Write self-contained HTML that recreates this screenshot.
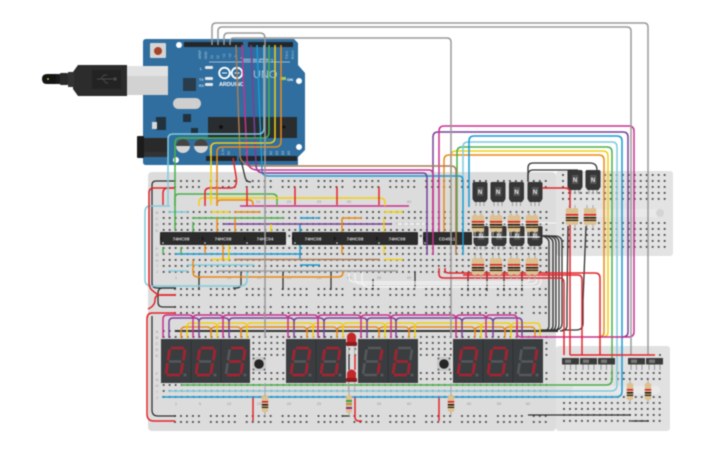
<!DOCTYPE html>
<html><head><meta charset="utf-8"><title>Circuit</title>
<style>html,body{margin:0;padding:0;background:#fff;width:725px;height:453px;overflow:hidden}
svg{display:block;position:absolute;left:0;top:0;filter:blur(.45px)}
text{font-family:"Liberation Sans",sans-serif}
.w path,.w line{fill:none}
</style></head><body>
<svg width="725" height="453" viewBox="0 0 725 453" xmlns="http://www.w3.org/2000/svg">
<defs>
<pattern id="h" patternUnits="userSpaceOnUse" x="0" y="0" width="5.98" height="5.98"><circle cx="2.99" cy="2.99" r="1.05" fill="#404040"/></pattern>
<pattern id="r" patternUnits="userSpaceOnUse" x="0" y="0" width="35.88" height="5.98"><g fill="#404040"><circle cx="2.99" cy="2.99" r="1.05"/><circle cx="8.97" cy="2.99" r="1.05"/><circle cx="14.95" cy="2.99" r="1.05"/><circle cx="20.93" cy="2.99" r="1.05"/><circle cx="26.91" cy="2.99" r="1.05"/></g></pattern>

<g id="dg" fill="none" stroke="#55585a" stroke-width="2.6"><path d="M10 9H23M8 22.5H20M6 36H19M8.6 10.5L7 21.2M24 10.5L22.4 21.2M6.6 24L5 34.8M21.6 24L20 34.8"/></g>
<g id="d0" fill="none" stroke="#a8202f" stroke-width="2.6"><path d="M10 9H23M6 36H19M8.6 10.5L7 21.2M24 10.5L22.4 21.2M6.6 24L5 34.8M21.6 24L20 34.8"/></g>
<g id="d1" fill="none" stroke="#a8202f" stroke-width="2.6"><path d="M24 10.5L22.4 21.2M21.6 24L20 34.8"/></g>
<g id="d3" fill="none" stroke="#a8202f" stroke-width="2.6"><path d="M10 9H23M8 22.5H20M6 36H19M24 10.5L22.4 21.2M21.6 24L20 34.8"/></g>
<g id="d6" fill="none" stroke="#a8202f" stroke-width="2.6"><path d="M8 22.5H20M6 36H19M8.6 10.5L7 21.2M6.6 24L5 34.8M21.6 24L20 34.8"/></g>

<g id="res"><line x1="0" y1="-3" x2="0" y2="21" stroke="#a8a8a8" stroke-width="1"/><rect x="-3.2" y="0" width="6.4" height="17" rx="2" fill="#dcc08f"/><rect x="-3.2" y="6" width="6.4" height="1.6" fill="#d8232a"/><rect x="-3.2" y="9" width="6.4" height="1.6" fill="#1c1c1c"/><rect x="-3.2" y="11.6" width="6.4" height="1.4" fill="#3a2a1a"/></g>

<g id="tr"><g stroke="#999" stroke-width="1"><line x1="-4" y1="18" x2="-4" y2="24"/><line x1="0" y1="18" x2="0" y2="24"/><line x1="4" y1="18" x2="4" y2="24"/></g><path d="M-7.5 1L-6.5 0H6.5L7.5 1V17L5.5 20H-5.5L-7.5 17Z" fill="#363636"/><rect x="-3" y="5" width="6.5" height="9" fill="#555"/></g>

<g id="sw"><g stroke="#999" stroke-width="1"><line x1="3" y1="6" x2="3" y2="12"/><line x1="8.5" y1="6" x2="8.5" y2="12"/><line x1="14" y1="6" x2="14" y2="12"/></g><rect x="0" y="0" width="17" height="6.5" fill="#3a3a3a"/><rect x="3" y="1.5" width="6" height="3.5" fill="#777"/></g>
</defs>

<!-- right boards -->
<rect x="556" y="171" width="117" height="85" rx="3" fill="#e3e3e3"/>
<rect x="556" y="346" width="114" height="85" rx="3" fill="#e1e1e1"/>
<rect x="582" y="209" width="78" height="8" rx="4" fill="#e9e9e9"/>
<circle cx="660" cy="213" r="4" fill="#d4d4d4"/>
<rect x="572" y="386" width="88" height="8" rx="4" fill="#e9e9e9"/>
<g transform="translate(560,172)"><rect width="108" height="30" fill="url(#h)"/></g>
<g transform="translate(560,220)"><rect width="108" height="30" fill="url(#h)"/></g>
<g transform="translate(561,370)"><rect width="102" height="12" fill="url(#h)"/></g>
<g transform="translate(561,394)"><rect width="102" height="30" fill="url(#h)"/></g>
<circle cx="660" cy="355" r="1" fill="#404040"/>

<!-- main boards -->
<rect x="148" y="172" width="408" height="259" rx="4" fill="#dcdcdc"/>
<rect x="160" y="239" width="390" height="6" fill="#e4e4e4"/>
<g transform="translate(172,178)"><rect width="375" height="12" fill="url(#r)"/></g>
<g transform="translate(172,286)"><rect width="375" height="12" fill="url(#r)"/></g>
<g transform="translate(172,304)"><rect width="375" height="12" fill="url(#r)"/></g>
<g transform="translate(172,413)"><rect width="375" height="12" fill="url(#r)"/></g>
<g transform="translate(160.7,209)"><rect width="388" height="30" fill="url(#h)"/></g>
<g transform="translate(160.7,245)"><rect width="388" height="30" fill="url(#h)"/></g>
<g transform="translate(160.7,328)"><rect width="388" height="30" fill="url(#h)"/></g>
<g transform="translate(160.7,370)"><rect width="388" height="30" fill="url(#h)"/></g>

<g font-size="4" fill="#9a9a9a" text-anchor="middle">
<text x="176" y="279">1</text><text x="200" y="279">5</text><text x="229" y="279">10</text><text x="259" y="279">15</text><text x="289" y="279">20</text><text x="319" y="279">25</text><text x="349" y="279">30</text><text x="379" y="279">35</text><text x="409" y="279">40</text>
<text x="176" y="405">1</text><text x="200" y="405">5</text><text x="229" y="405">10</text><text x="259" y="405">15</text><text x="289" y="405">20</text><text x="319" y="405">25</text><text x="379" y="405">35</text><text x="409" y="405">40</text><text x="469" y="405">50</text><text x="499" y="405">55</text><text x="528" y="405">60</text>
<text x="258" y="203">15</text><text x="289" y="203">20</text><text x="319" y="203">25</text><text x="349" y="203">30</text><text x="409" y="203">40</text>
<text x="157" y="214">B</text><text x="157" y="220">C</text><text x="157" y="226">D</text><text x="157" y="232">E</text><text x="157" y="250">F</text><text x="157" y="256">G</text><text x="157" y="262">H</text><text x="157" y="267">I</text><text x="157" y="273">J</text>
<text x="157" y="333">A</text><text x="157" y="339">B</text><text x="157" y="345">C</text><text x="157" y="351">D</text><text x="157" y="357">E</text><text x="157" y="375">F</text><text x="157" y="381">G</text><text x="157" y="387">H</text><text x="157" y="393">I</text><text x="157" y="399">J</text>
</g>

<!-- chips -->
<rect x="160" y="232" width="126" height="13" rx="1" fill="#2c2c2c"/>
<rect x="292" y="232" width="126" height="13" rx="1" fill="#2c2c2c"/>
<rect x="423" y="232" width="49" height="13" rx="1" fill="#2c2c2c"/>
<g font-size="4.6" fill="#d8d8d8" text-anchor="middle" font-weight="bold">
<text x="181" y="240.3">74HC08</text><text x="223" y="240.3">74HC08</text><text x="265" y="240.3">74HC04</text>
<text x="313" y="240.3">74HC08</text><text x="355" y="240.3">74HC08</text><text x="397" y="240.3">74HC08</text>
<text x="447" y="240.3">CD4511</text></g>
<g fill="#e8e8e8"><circle cx="163" cy="243" r=".8"/><circle cx="205" cy="243" r=".8"/><circle cx="247" cy="243" r=".8"/><circle cx="295" cy="243" r=".8"/><circle cx="337" cy="243" r=".8"/><circle cx="379" cy="243" r=".8"/><circle cx="425" cy="243" r=".8"/></g>
<g fill="#161616"><path d="M160 236l2 2.5-2 2.5zM202 236l2 2.5-2 2.5zM244 236l2 2.5-2 2.5zM292 236l2 2.5-2 2.5zM334 236l2 2.5-2 2.5zM376 236l2 2.5-2 2.5zM423 236l2 2.5-2 2.5z"/></g>

<!-- digit boxes -->
<rect x="161" y="339" width="89" height="44" fill="#3a3d40"/>
<rect x="286" y="339" width="60" height="44" fill="#3a3d40"/>
<rect x="358" y="339" width="60" height="44" fill="#3a3d40"/>
<rect x="453" y="339" width="90" height="44" fill="#3a3d40"/>
<g stroke="#2c2e30" stroke-width=".7"><line x1="191" y1="339" x2="191" y2="383"/><line x1="221" y1="339" x2="221" y2="383"/><line x1="316" y1="339" x2="316" y2="383"/><line x1="388" y1="339" x2="388" y2="383"/><line x1="483" y1="339" x2="483" y2="383"/><line x1="513" y1="339" x2="513" y2="383"/></g>
<use href="#dg" x="161" y="339"/><use href="#dg" x="191" y="339"/><use href="#dg" x="221" y="339"/><use href="#dg" x="286" y="339"/><use href="#dg" x="316" y="339"/><use href="#dg" x="358" y="339"/><use href="#dg" x="388" y="339"/><use href="#dg" x="453" y="339"/><use href="#dg" x="483" y="339"/><use href="#dg" x="513" y="339"/>
<use href="#d0" x="161" y="339"/><use href="#d0" x="191" y="339"/><use href="#d3" x="221" y="339"/><use href="#d0" x="286" y="339"/><use href="#d0" x="316" y="339"/><use href="#d1" x="358" y="339"/><use href="#d6" x="388" y="339"/><use href="#d0" x="453" y="339"/><use href="#d0" x="483" y="339"/><use href="#d1" x="513" y="339"/>
<g fill="#55585a"><circle cx="185" cy="375" r="1.6"/><circle cx="215" cy="375" r="1.6"/><circle cx="245" cy="375" r="1.6"/><circle cx="310" cy="375" r="1.6"/><circle cx="340" cy="375" r="1.6"/><circle cx="382" cy="375" r="1.6"/><circle cx="412" cy="375" r="1.6"/><circle cx="477" cy="375" r="1.6"/><circle cx="507" cy="375" r="1.6"/><circle cx="537" cy="375" r="1.6"/></g>

<!-- pushbuttons -->
<rect x="252" y="357" width="14" height="14" rx="1" fill="#c8c8c8"/><circle cx="259" cy="364" r="4.8" fill="#262626"/>
<g fill="#666"><circle cx="253.5" cy="358.5" r="1"/><circle cx="264.5" cy="358.5" r="1"/><circle cx="253.5" cy="369.5" r="1"/><circle cx="264.5" cy="369.5" r="1"/></g>
<rect x="437" y="357" width="14" height="14" rx="1" fill="#c8c8c8"/><circle cx="444" cy="364" r="4.8" fill="#262626"/>
<g fill="#666"><circle cx="438.5" cy="358.5" r="1"/><circle cx="449.5" cy="358.5" r="1"/><circle cx="438.5" cy="369.5" r="1"/><circle cx="449.5" cy="369.5" r="1"/></g>

<!-- Arduino -->
<path d="M146 39H294L298 43V65L305 73V150L298 157V165H146Q143 165 143 162V42Q143 39 146 39Z" fill="#2f6e9f"/>
<rect x="184" y="42" width="59" height="5" fill="#23272a"/><rect x="248" y="42" width="45" height="5" fill="#23272a"/>
<rect x="206" y="156" width="31" height="5" fill="#23272a"/><rect x="239" y="156" width="58" height="5" fill="#23272a"/>
<g fill="#fff"><circle cx="179" cy="45" r="3"/><circle cx="299" cy="81" r="3"/><circle cx="299" cy="147" r="3"/><circle cx="176" cy="160" r="3"/></g>
<rect x="150" y="43" width="16" height="15" rx="1" fill="#d5d5d5"/><circle cx="158" cy="51" r="4" fill="#a5432a"/>
<!-- usb -->
<rect x="127" y="66" width="41" height="29" fill="#d2d2d2"/><rect x="127" y="66" width="41" height="10" fill="#e2e2e2"/>
<path d="M127 65H78L73 72V89L78 96H127Z" fill="#2c2c2c"/>
<rect x="92" y="70" width="29" height="19" fill="#232323"/>
<g stroke="#4a4a4a" fill="none" stroke-width="1"><path d="M97 79H113M101 79L104 75H107M103 79L106 83H108"/></g><circle cx="115" cy="79" r="1.8" fill="#4a4a4a"/>
<rect x="55" y="74" width="5" height="10" fill="#1c1c1c"/><rect x="60" y="73" width="8" height="12" rx="1" fill="#2a2a2a"/><rect x="68" y="72" width="6" height="15" fill="#333"/>
<path d="M42 79Q42 74 47 74H56V84H47Q42 84 42 79Z" fill="#141414"/><circle cx="48" cy="79" r="1" fill="#d8b52a"/>
<!-- parts -->
<rect x="183" y="78" width="13" height="13" fill="#2a3c4a"/>
<rect x="173" y="98" width="28" height="11" rx="5.5" fill="#cfcfcf"/>
<rect x="156" y="117" width="10" height="4" fill="#21313d"/><rect x="156" y="121" width="10" height="9" fill="#21313d"/><rect x="152" y="122" width="5" height="7" fill="#d8d8d8"/>
<rect x="183" y="114" width="8" height="8" fill="#21313d"/><rect x="191" y="128" width="7" height="5" fill="#21313d"/>
<rect x="208" y="117" width="89" height="21" fill="#2a2d30"/><circle cx="221" cy="127" r="2" fill="#111"/><circle cx="284" cy="127" r="1.5" fill="#111"/>
<rect x="137" y="136" width="7" height="22" rx="1" fill="#1b1b1b"/><rect x="144" y="138" width="24" height="19" fill="#333"/><rect x="144" y="138" width="24" height="14" fill="#2a2a2a"/>
<circle cx="183" cy="146" r="7" fill="#d5d5d5"/><path d="M176 146A7 7 0 0 1 190 146Z" fill="#444"/><circle cx="201" cy="146" r="7" fill="#d5d5d5"/><path d="M194 146A7 7 0 0 1 208 146Z" fill="#444"/>
<!-- logo -->
<g fill="none" stroke="#fff" stroke-width="1.9"><circle cx="224.5" cy="73" r="5.3"/><circle cx="237" cy="73" r="5.3"/></g>
<g stroke="#fff" stroke-width="1"><path d="M222 73H227M234.5 73H239.5M237 70.5V75.5"/></g>
<text x="219" y="86" font-size="5.4" font-weight="bold" fill="#fff">ARDUINO</text>
<text x="253" y="78" font-size="11" fill="#a9c7dd" font-weight="normal">UNO</text>
<line x1="209" y1="62" x2="290" y2="62" stroke="#fff" stroke-width=".7" opacity=".7"/>
<text x="243" y="61" font-size="3.8" font-weight="bold" fill="#fff" opacity=".75">DIGITAL (PWM~)</text>
<text x="287" y="81" font-size="4" font-weight="bold" fill="#fff">ON</text><rect x="280" y="77" width="6" height="3" fill="#a7c76a"/>
<g fill="#e8e8e8"><rect x="205" y="66" width="8" height="3" rx="1"/><rect x="205" y="77" width="8" height="3" rx="1"/><rect x="205" y="83" width="8" height="3" rx="1"/></g>
<g font-size="3.6" fill="#fff"><text x="200" y="70">L</text><text x="199" y="81">TX</text><text x="199" y="87">RX</text></g>
<g font-size="3.4" fill="#e6eef5" opacity=".7">
<text transform="translate(201,59) rotate(-90)">AREF</text><text transform="translate(207,59) rotate(-90)">GND</text><text transform="translate(213,59) rotate(-90)">13</text><text transform="translate(219,59) rotate(-90)">12</text><text transform="translate(225,59) rotate(-90)">~11</text><text transform="translate(231,59) rotate(-90)">~10</text><text transform="translate(237,59) rotate(-90)">~9</text><text transform="translate(243,59) rotate(-90)">8</text>
<text transform="translate(288,59) rotate(-90)">TX&gt;1</text><text transform="translate(294,59) rotate(-90)">RX&lt;0</text>
<text transform="translate(212,155) rotate(-90)">IOREF</text><text transform="translate(224,155) rotate(-90)">3.3V</text><text transform="translate(230,155) rotate(-90)">5V</text><text transform="translate(248,155) rotate(-90)">Vin</text><text transform="translate(266,155) rotate(-90)">A1</text><text transform="translate(272,155) rotate(-90)">A2</text><text transform="translate(278,155) rotate(-90)">A3</text><text transform="translate(284,155) rotate(-90)">A4</text><text transform="translate(290,155) rotate(-90)">A5</text>
</g>

<!-- transistors -->
<use href="#tr" x="481" y="226"/><use href="#tr" x="499" y="226"/><use href="#tr" x="517" y="226"/><use href="#tr" x="535" y="226"/>
<use href="#tr" x="480" y="182"/><use href="#tr" x="498" y="182"/><use href="#tr" x="516.5" y="182"/><use href="#tr" x="535" y="182"/>
<use href="#tr" x="575" y="170"/><use href="#tr" x="593" y="170"/>
<g font-size="6" font-weight="bold" fill="#eee" text-anchor="middle">
<text x="480" y="194">N</text><text x="498" y="194">N</text><text x="516.5" y="194">N</text><text x="535" y="194">N</text>
<text x="481" y="238">N</text><text x="499" y="238">N</text><text x="517" y="238">N</text><text x="535" y="238">N</text>
<text x="575" y="182">N</text><text x="593" y="182">N</text></g>

<!-- wires -->
<g class="w" stroke-width="1.5" fill="none">
<g stroke="#333" stroke-width="1.3">
<path d="M175 181H156Q152 181 152 185V283Q152 288 157 288H176"/>
<path d="M176 288H163Q158 288 158 293V302Q158 307 163 307H176"/>
<path d="M152 316V410Q152 416 158 416H176"/>
<path d="M199 272V290M283 272V290M331 272V290M415 272V288M373 279V290"/>
<path d="M241 272V284Q241 288 236 288H233"/>
<path d="M468 273V291M487 273V291M504 273V291M522 273V291"/>
<path d="M528 182V168Q528 163 533 163H590Q597 163 597 170"/>
<path d="M528 182V175Q528 170 533 170H578"/>
<path d="M586 226L583 300V323Q583 330 576 330H562"/>
<path d="M568 226L567 300V325Q567 331 560 331"/>
<path d="M542 236H555Q562 236 562 243V323Q562 330 555 330H540"/>
<path d="M542 236H552Q559 237 559 243V324Q559 331 552 331H540"/>
<path d="M542 236H549Q556 237 556 243V324Q556 331 549 331H540"/>
<path d="M542 236H546Q553 238 553 243V325Q553 331 546 331H540"/>
<path d="M542 236H543Q549 238 549 243V325Q549 331 543 331H540"/>
<path d="M528 415H631M631 421H649M342 416H350M349 355V370"/>
<path d="M241 160L245 177Q246 182 251 182"/>
</g>
<path d="M175 331H558" stroke="#333" stroke-width="1.9"/>
<g stroke="#f4f4f4" stroke-width="1.2">
<path d="M349 272V276Q349 282 355 282H525Q530 282 530 276V273"/>
<path d="M355 272V278Q355 284 361 284H532Q537 284 537 278V273"/>
<path d="M362 272V280Q362 287 368 287H534Q541 287 541 280V273"/>
<path d="M396 224H425M472 223H556M472 237H540"/>
</g>
<g stroke="#7fcbdc"><path d="M168 212H188M168 271H188M187 265H254"/></g>
<g stroke="#f2cf10"><path d="M211 212H230M384 212H403M211 259.5H230M384 259.5H403"/></g>
<g stroke="#ea8a17"><path d="M234 212H260M342 218H362"/></g>
<g stroke="#4ab04a"><path d="M192 218H284"/></g>
<g stroke="#1b9ad6"><path d="M300 218H313M315 218H320M175 254H300M300 265H320M300 224V232M300 245V259"/></g>
<g stroke="#7b3f98"><path d="M223 224H392"/></g>
<g stroke="#c9308e"><path d="M240 206H409"/></g>
<g stroke="#ab7b55"><path d="M234 259.5H355M356 259.5H363M365 259.5H380"/></g>
<g stroke="#a0a0a0"><path d="M217 271H398"/></g>
<g stroke="#4ab04a"><path d="M193 222V232M163 247V254M181 247V254"/></g>
<g stroke="#ea8a17"><path d="M217 218V232M235 218V232M342 218V232M205 245V254M223 245V260M342 245V254"/></g>
<g stroke="#f2cf10"><path d="M271 224V232M384 218V232M229 245V260M384 245V254"/></g>
<path d="M193 260V272Q193 277 198 277H338Q343 277 343 272V271" stroke="#ea8a17"/>
<path d="M175 206V198Q175 194 179 194H272Q277 194 277 198V206" stroke="#4ab04a"/>
<path d="M199 206V202Q199 198 203 198H380Q385 198 385 203V206" stroke="#f2cf10"/>
<path d="M217 206V204Q217 200 221 200H249Q253 200 253 204V206" stroke="#ea8a17"/>
<path d="M170 206H150Q145 206 145 212V280Q145 286 152 286H240Q247 286 247 280V272" stroke="#7fcbdc"/>
<g stroke="#e3262b">
<path d="M233 158L236 176Q238 188 231 188H210Q205 188 205 192V206"/>
<path d="M247 188V206M295 187V205M337 187V205M379 187V205"/>
<path d="M175 188H154Q149 188 149 193V283Q149 288 153 291L158 295H175"/>
<path d="M175 188H168Q163 188 163 193V205"/>
<path d="M176 295H160Q155 295 155 300Q155 305 150 308L148 309"/>
<path d="M176 313H152Q147 313 147 319V414Q147 421 154 421H175"/>
<path d="M253 397V421M355 397V417Q355 421 359 421H362M439 397V421M355 355V370"/>
</g>
<path stroke="#ea8a17" d="M181 338V331q0-4 4-4h22q4 0 4 4v7M211 338V331q0-4 4-4h22q4 0 4 4v7M241 338V331q0-4 4-4h58q4 0 4 4v7M307 338V331q0-4 4-4h22q4 0 4 4v7M337 338V331q0-4 4-4h34q4 0 4 4v7M379 338V331q0-4 4-4h22q4 0 4 4v7M409 338V331q0-4 4-4h58q4 0 4 4v7M475 338V331q0-4 4-4h22q4 0 4 4v7M505 338V331q0-4 4-4h22q4 0 4 4v7"/>
<path stroke="#f2cf10" d="M187 338V327q0-4 4-4h22q4 0 4 4v11M217 338V327q0-4 4-4h22q4 0 4 4v11M247 338V327q0-4 4-4h58q4 0 4 4v11M313 338V327q0-4 4-4h22q4 0 4 4v11M343 338V327q0-4 4-4h34q4 0 4 4v11M385 338V327q0-4 4-4h22q4 0 4 4v11M415 338V327q0-4 4-4h58q4 0 4 4v11M481 338V327q0-4 4-4h22q4 0 4 4v11M511 338V327q0-4 4-4h21q4 0 4 4v11"/>
<path stroke="#7b3f98" d="M169 338V322q0-4 4-4h22q4 0 4 4v16M199 338V322q0-4 4-4h22q4 0 4 4v16M229 338V322q0-4 4-4h57q4 0 4 4v16M294 338V322q0-4 4-4h22q4 0 4 4v16M324 338V322q0-4 4-4h35q4 0 4 4v16M367 338V322q0-4 4-4h21q4 0 4 4v16M396 338V322q0-4 4-4h58q4 0 4 4v16M462 338V322q0-4 4-4h23q4 0 4 4v16M493 338V322q0-4 4-4h21q4 0 4 4v16"/>
<path stroke="#c9308e" d="M163 338V319q0-4 4-4h22q4 0 4 4v19M193 338V319q0-4 4-4h22q4 0 4 4v19M223 338V319q0-4 4-4h57q4 0 4 4v19M288 338V319q0-4 4-4h22q4 0 4 4v19M318 338V319q0-4 4-4h35q4 0 4 4v19M361 338V319q0-4 4-4h22q4 0 4 4v19M391 338V319q0-4 4-4h57q4 0 4 4v19M456 338V319q0-4 4-4h22q4 0 4 4v19M486 338V319q0-4 4-4h23q4 0 4 4v19"/>
<path stroke="#ea8a17" d="M444 232V160Q444 155 449 155H599Q604 155 604 160V332Q604 337 598 337"/>
<path stroke="#f2cf10" d="M451 232V156Q451 151 456 151H603Q608 151 608 156V332Q608 337 602 337"/>
<path stroke="#4ab04a" d="M457 232V152Q457 147 462 147H607Q612 147 612 152V379Q612 385 606 385H181"/>
<path stroke="#7fcbdc" d="M463 180V147Q463 142 468 142H612Q617 142 617 147V385Q617 391 611 391H168"/>
<path stroke="#1b9ad6" d="M469 207V141Q469 136 474 136H617Q622 136 622 141V391Q622 397 616 397H162"/>
<path stroke="#7b3f98" d="M433 232V137Q433 132 438 132H623Q628 132 628 137V332Q628 337 622 337"/>
<path stroke="#c9308e" d="M439 232V131Q439 126 444 126H629Q634 126 634 131V332Q634 337 628 337H521Q517 337 517 333V325"/>
<path stroke="#ab7b55" d="M236 45L240 155Q240 160 244 163Q247 166 252 166H451Q456 166 456 171V255"/>
<path stroke="#1b9ad6" d="M257 45L262 170Q262 176 268 176H459Q463 176 463 181V255"/>
<path stroke="#7b3f98" d="M251 45L256 165Q256 173 264 173H423Q427 173 427 178V255"/>
<path stroke="#c9308e" d="M242 45L247 158Q247 170 258 170H429Q433 170 433 175V255"/>
<path stroke="#7fcbdc" d="M264 45V128Q264 134 258 134H173Q168 134 168 139V206"/>
<path stroke="#4ab04a" d="M269 45V132Q269 138 263 138H180Q175 138 175 143V230"/>
<path stroke="#f2cf10" d="M275 45V137Q275 143 269 143H216Q211 143 211 148V205"/>
<path stroke="#ea8a17" d="M281 45V141Q281 147 275 147H222Q217 147 217 152V205"/>
<g stroke="#999" stroke-width="1.5">
<path d="M212 45V27Q212 23 216 23H644Q648 23 648 27V355"/>
<path d="M218 45V31Q218 27 222 27H627Q631 27 631 31V355"/>
<path d="M224 45V37Q224 33 228 33H260Q265 33 265 38V338"/>
<path d="M230 45V42Q230 38 234 38H447Q451 38 451 42V338"/>
</g>
<g stroke="#e3262b">
<path d="M439 268V274Q439 278 444 278H560Q564 278 564 283V355"/>
<path d="M445 268V270Q445 273 449 273H595Q600 273 600 278V355"/>
<path d="M463 275H578Q582 275 582 280V355"/>
<path d="M542 188H565Q570 188 570 193V355"/>
<path d="M570 355H655"/>
</g>
</g>

<!-- resistors -->
<use href="#res" x="475" y="215"/><use href="#res" x="481" y="215"/><use href="#res" x="493" y="215"/><use href="#res" x="499" y="215"/><use href="#res" x="511" y="215"/><use href="#res" x="517" y="215"/><use href="#res" x="529" y="215"/><use href="#res" x="535" y="215"/>
<use href="#res" x="475" y="258"/><use href="#res" x="481" y="258"/><use href="#res" x="493" y="258"/><use href="#res" x="499" y="258"/><use href="#res" x="511" y="258"/><use href="#res" x="517" y="258"/><use href="#res" x="529" y="258"/><use href="#res" x="535" y="258"/>
<use href="#res" x="569" y="208"/><use href="#res" x="575" y="208"/><use href="#res" x="587" y="208"/><use href="#res" x="593" y="208"/>
<use href="#res" x="630" y="383"/><use href="#res" x="648" y="383"/>
<use href="#res" x="265" y="395"/><use href="#res" x="451" y="395"/>
<g><line x1="349" y1="382" x2="349" y2="416" stroke="#a8a8a8"/><rect x="346" y="395" width="6" height="18" rx="2" fill="#dcc08f"/><rect x="346" y="400" width="6" height="2" fill="#3aa040"/><rect x="346" y="403" width="6" height="2" fill="#b5903a"/><rect x="346" y="407" width="6" height="2" fill="#8a2a90"/></g>
<line x1="265" y1="383" x2="265" y2="396" stroke="#a8a8a8"/><line x1="451" y1="383" x2="451" y2="396" stroke="#a8a8a8"/>

<!-- LEDs -->
<g><line x1="348.5" y1="344" x2="348.5" y2="355" stroke="#aaa"/><line x1="354.5" y1="344" x2="354.5" y2="355" stroke="#aaa"/><line x1="348.5" y1="380" x2="348.5" y2="392" stroke="#aaa"/><line x1="354.5" y1="380" x2="354.5" y2="392" stroke="#aaa"/>
<path d="M347 346V337A4.5 4.5 0 0 1 356 337V346Z" fill="#c4272a"/><rect x="346" y="342" width="11" height="4" rx="1" fill="#8a1d20"/>
<path d="M347 382V374A4.5 4.5 0 0 1 356 374V382Z" fill="#c4272a"/><rect x="346" y="378" width="11" height="4" rx="1" fill="#8a1d20"/></g>

<!-- switches -->
<use href="#sw" x="562" y="358"/><use href="#sw" x="580" y="358"/><use href="#sw" x="598" y="358"/><use href="#sw" x="628" y="358"/><use href="#sw" x="646" y="358"/>
</svg>
</body></html>
